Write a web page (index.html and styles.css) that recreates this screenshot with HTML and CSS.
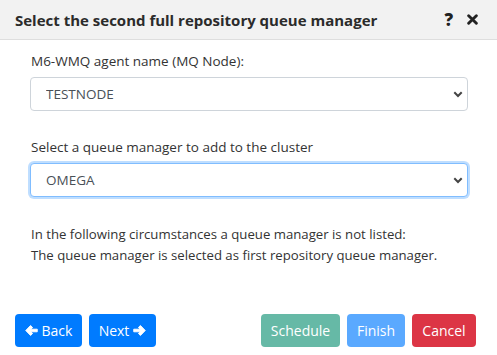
FILE: index.html
```html
<!DOCTYPE html>
<html lang="en">
<head>
  <meta charset="UTF-8" />
  <title>Select the second full repository queue manager</title>
  <link rel="stylesheet" href="styles.css">
</head>
<body>
  <div class="modal">
    <!-- Header -->
    <div class="modal-header">
      <h1 class="modal-title">Select the second full repository queue manager</h1>
      <div class="header-tools">
        <span class="help">?</span>
        <svg class="close" viewBox="0 0 10 10" width="11" height="11">
          <path d="M1.5 1.5 L8.5 8.5 M8.5 1.5 L1.5 8.5" stroke="#222" stroke-width="2.6" stroke-linecap="round"/>
        </svg>
      </div>
    </div>

    <!-- Body -->
    <div class="modal-body">
      <div class="field">
        <label class="field-label">M6-WMQ agent name (MQ Node):</label>
        <div class="select-wrap">
          <select class="select"><option>TESTNODE</option></select>
          <svg class="chevron" viewBox="0 0 10 7" width="10" height="7">
            <path d="M1.3 1.3 L5 5 L8.7 1.3" fill="none" stroke="#444" stroke-width="2"/>
          </svg>
        </div>
      </div>

      <div class="field">
        <label class="field-label">Select a queue manager to add to the cluster</label>
        <div class="select-wrap">
          <select class="select focused"><option>OMEGA</option></select>
          <svg class="chevron" viewBox="0 0 10 7" width="10" height="7">
            <path d="M1.3 1.3 L5 5 L8.7 1.3" fill="none" stroke="#444" stroke-width="2"/>
          </svg>
        </div>
      </div>

      <p class="note">In the following circumstances a queue manager is not listed:<br>
      The queue manager is selected as first repository queue manager.</p>
    </div>

    <!-- Footer -->
    <div class="modal-footer">
      <div class="btn-group">
        <button class="btn btn-primary btn-nav">
          <svg class="btn-icon" viewBox="0 0 14 14" width="13" height="13"><path fill="#fff" stroke="#fff" stroke-width="1" stroke-linejoin="round" d="M0.8 7 L6 1.6 L8.2 3.8 L6.2 5.6 H13.2 V8.4 H6.2 L8.2 10.2 L6 12.4 Z"/></svg>
          Back
        </button>
        <button class="btn btn-primary btn-nav">
          Next
          <svg class="btn-icon" viewBox="0 0 14 14" width="13" height="13"><path fill="#fff" stroke="#fff" stroke-width="1" stroke-linejoin="round" d="M13.2 7 L8 1.6 L5.8 3.8 L7.8 5.6 H0.8 V8.4 H7.8 L5.8 10.2 L8 12.4 Z"/></svg>
        </button>
      </div>
      <div class="btn-group">
        <button class="btn btn-schedule">Schedule</button>
        <button class="btn btn-finish">Finish</button>
        <button class="btn btn-danger">Cancel</button>
      </div>
    </div>
  </div>
</body>
</html>
```

FILE: styles.css
```css
* {
  margin: 0;
  padding: 0;
  box-sizing: border-box;
}

body {
  font-family: "Open Sans", "Noto Sans", sans-serif;
  background-color: #fff;
  color: #212529;
  width: 497px;
  height: 355px;
  overflow: hidden;
}

.modal {
  display: flex;
  flex-direction: column;
  height: 355px;
}

/* Header */
.modal-header {
  height: 40px;
  display: flex;
  align-items: center;
  justify-content: space-between;
  padding: 0 19px 0 15px;
  background-color: #f2f2f2;
  border-bottom: 1px solid #dedede;
}

.modal-title {
  font-size: 15px;
  font-weight: 700;
  color: #2b2b2b;
}

.header-tools {
  display: flex;
  align-items: center;
  gap: 14px;
}

.help {
  font-size: 17px;
  font-weight: 800;
  color: #222;
}

/* Body */
.modal-body {
  padding: 12px 29px 0 30px;
  flex: 1;
}

.field {
  margin-bottom: 27px;
}

.field-label {
  display: block;
  font-size: 13.5px;
  color: #333;
  padding-left: 1px;
  margin-bottom: 7px;
}

.select-wrap {
  position: relative;
}

.select {
  appearance: none;
  -webkit-appearance: none;
  width: 100%;
  height: 34px;
  padding: 0 15px;
  font-family: inherit;
  font-size: 13.5px;
  color: #495057;
  background-color: #fff;
  border: 1px solid #ced4da;
  border-radius: 4px;
  outline: none;
}

.select.focused {
  border-color: #80bdff;
  box-shadow: 0 0 0 2px rgba(0, 123, 255, 0.25);
}

.chevron {
  position: absolute;
  right: 5px;
  top: 14px;
}

.note {
  margin-top: 25px;
  font-size: 13.2px;
  line-height: 21px;
  color: #333;
  padding-left: 1px;
}

/* Footer */
.modal-footer {
  display: flex;
  justify-content: space-between;
  padding: 0 21px 8px 15px;
}

.btn-group {
  display: flex;
  gap: 7px;
}

.btn {
  height: 33px;
  padding: 0 11px;
  display: flex;
  align-items: center;
  justify-content: center;
  gap: 4px;
  font-family: inherit;
  font-size: 14px;
  color: #fff;
  border: none;
  border-radius: 4px;
}

.btn-icon {
  flex-shrink: 0;
}

.btn-nav {
  width: 67px;
  padding: 0;
}

.btn-primary {
  background-color: #007bff;
}

.btn-schedule {
  width: 79px;
  background-color: #66b9a6;
}

.btn-finish {
  width: 58px;
  background-color: #5aa9ff;
}

.btn-danger {
  width: 64px;
  background-color: #dc3545;
}
```
